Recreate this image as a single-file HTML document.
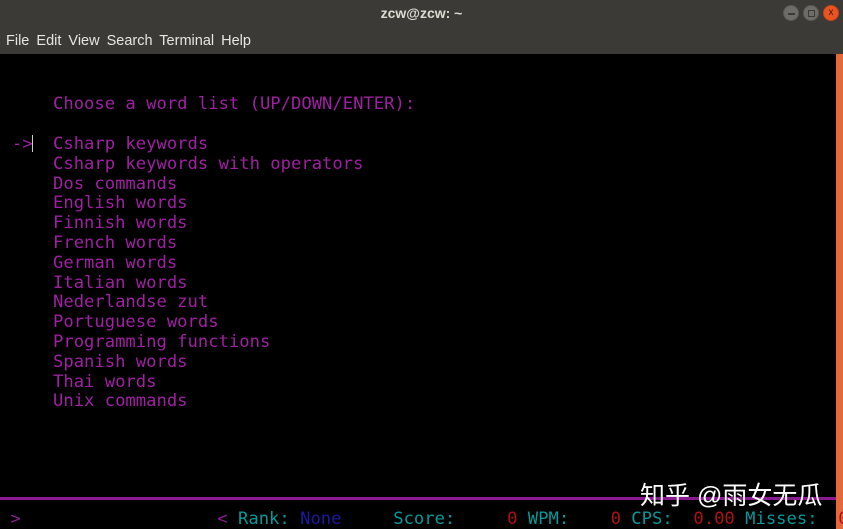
<!DOCTYPE html>
<html><head><meta charset="utf-8"><style>
*{margin:0;padding:0;box-sizing:border-box}
body{width:843px;height:529px;overflow:hidden;background:#000;position:relative;font-family:"Liberation Sans",sans-serif}
#title{position:absolute;left:0;top:0;width:843px;height:28px;background:#3b3a36;color:#dfdbd2;font-size:14px;font-weight:bold;text-align:center;line-height:26px}
#menu{position:absolute;left:0;top:28px;width:843px;height:26px;background:#3b3a36;color:#e8e6e1;font-size:14.5px;line-height:26px;padding-left:6px;word-spacing:3px}
.btn{position:absolute;top:5px;width:16px;height:16px;border-radius:50%;background:#6d6c67;border:1px solid #5a5955}
#term{position:absolute;left:0;top:54px;width:836px;height:475px;background:#000;font-family:"DejaVu Sans Mono",monospace;font-size:17.2px;color:#a01fa3;white-space:pre}
.l{position:absolute;left:53px;height:20px;line-height:20px}
#sb{position:absolute;left:836px;top:54px;width:7px;height:475px;background:#e4683a}
#line{position:absolute;left:0;top:497px;width:836px;height:3px;background:#8a1a92}
#status{position:absolute;left:0;top:509px;line-height:20px;height:20px;font-family:"DejaVu Sans Mono",monospace;font-size:17.2px;white-space:pre;color:#06989a}
#wm{position:absolute;left:640px;top:476px;color:#fff;font-family:"Liberation Sans","Noto Sans CJK SC",sans-serif;font-size:25px}
</style></head><body>
<div id="title">zcw@zcw: ~</div>
<div class="btn" style="left:783px"><div style="position:absolute;left:4px;top:7px;width:7px;height:1.5px;background:#3b3a36"></div></div>
<div class="btn" style="left:803px"><div style="position:absolute;left:4px;top:4px;width:7px;height:7px;border:1px solid #3b3a36"></div></div>
<div class="btn" style="left:823px;background:#e95420;border-color:#c4441a;color:#3b1a10;font-size:10px;line-height:14px;text-align:center">x</div>
<div id="menu">File Edit View Search Terminal Help</div>
<div id="term">
<div class="l" style="top:40px">Choose a word list (UP/DOWN/ENTER):</div>
<div class="l" style="left:12px;top:80px">-></div>
<div style="position:absolute;left:32px;top:81px;width:1px;height:17px;background:#ccc"></div>
<div class="l" style="top:80px">Csharp keywords</div>
<div class="l" style="top:100px">Csharp keywords with operators</div>
<div class="l" style="top:120px">Dos commands</div>
<div class="l" style="top:139px">English words</div>
<div class="l" style="top:159px">Finnish words</div>
<div class="l" style="top:179px">French words</div>
<div class="l" style="top:199px">German words</div>
<div class="l" style="top:219px">Italian words</div>
<div class="l" style="top:238px">Nederlandse zut</div>
<div class="l" style="top:258px">Portuguese words</div>
<div class="l" style="top:278px">Programming functions</div>
<div class="l" style="top:298px">Spanish words</div>
<div class="l" style="top:318px">Thai words</div>
<div class="l" style="top:337px">Unix commands</div>
</div>
<div id="sb"></div>
<div id="line"></div>
<div id="status"><span style="color:#8a1a92"> &gt;                   &lt;</span> Rank: <span style="color:#1a1aa0">None</span>     Score:     <span style="color:#b01010">0</span> WPM:    <span style="color:#b01010">0</span> CPS:  <span style="color:#b01010">0.00</span> Misses:  <span style="color:#b01010">0</span></div>
<div id="wm">知乎 @雨女无瓜</div>
</body></html>
